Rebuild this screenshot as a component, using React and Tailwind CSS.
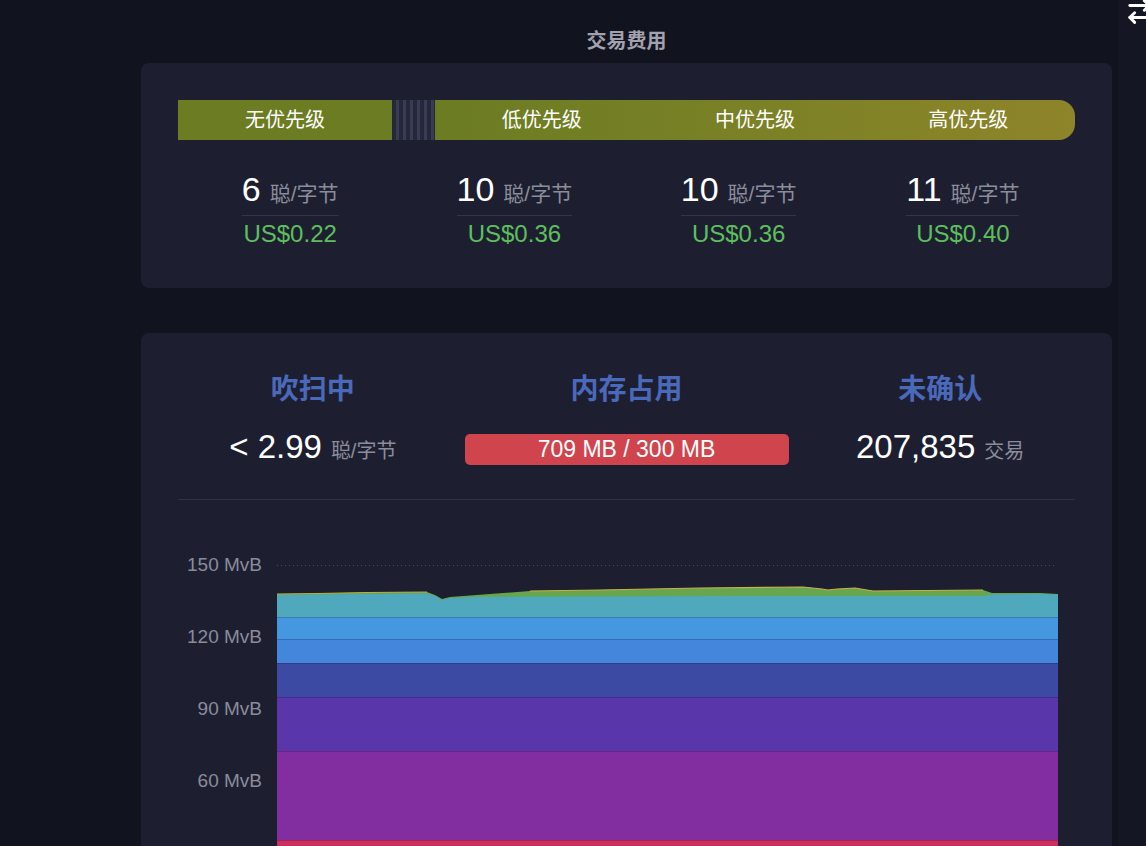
import React from "react";

const FEES = [
  { v: "6", usd: "US$0.22" },
  { v: "10", usd: "US$0.36" },
  { v: "10", usd: "US$0.36" },
  { v: "11", usd: "US$0.40" },
];

function ArrowIcon() {
  return (
    <svg width="29" height="29" viewBox="0 0 24 24" fill="none" stroke="#ffffff" strokeWidth="2.4" strokeLinecap="round" strokeLinejoin="round">
      <path d="m16 3 4 4-4 4" />
      <path d="M20 7H4" />
      <path d="m8 21-4-4 4-4" />
      <path d="M4 17h16" />
    </svg>
  );
}

function Chart() {
  // coordinates: x' = x - 277, y' = y - 529
  const greenTop =
    "M0 65 L40 64.5 L90 63.5 L150 63 L158 66 L165 70 L173 68 L200 66 L253 62 L323 61 L423 59 L526 58 L545 60 L551 61 L560 60 L578 59 L596 62 L650 61.5 L706 61 L712 63 L715 64 L763 64 L781 65 L781 88 L0 88 Z";
  const tealTop =
    "M0 66 L40 65.5 L90 65 L150 64.5 L158 67 L165 71 L173 69 L200 68 L300 67.5 L500 67 L706 67 L715 65.5 L763 65 L781 65.5 L781 88 L0 88 Z";
  const yellow =
    "M253 62 L323 61 L423 59 L526 58 L545 60 L551 61 L560 60 L578 59 L596 62 L650 61.5 L706 61";
  return (
    <svg width="781" height="360" viewBox="0 0 781 360" className="block shrink-0">
      <line x1="0" y1="36.5" x2="779" y2="36.5" stroke="#4b4d62" strokeWidth="1" strokeDasharray="1 3" />
      <path d={greenTop} fill="#67a64e" />
      <path d={yellow} fill="none" stroke="#c9b149" strokeWidth="1.2" />
      <path d="M0 65 L40 64.5 L90 63.5 L150 63" fill="none" stroke="#b8b04a" strokeWidth="1" />
      <path d={tealTop} fill="#4fa8bc" />
      <rect x="0" y="88" width="781" height="22" fill="#4598df" />
      <rect x="0" y="110" width="781" height="24" fill="#4386db" />
      <rect x="0" y="134" width="781" height="34" fill="#3c4aa4" />
      <rect x="0" y="168" width="781" height="54" fill="#5936a9" />
      <rect x="0" y="222" width="781" height="89" fill="#822da0" />
      <rect x="0" y="311" width="781" height="49" fill="#cb2f5f" />
      <g stroke="#000000" strokeOpacity="0.18" strokeWidth="1">
        <line x1="0" y1="88.5" x2="781" y2="88.5" />
        <line x1="0" y1="110.5" x2="781" y2="110.5" />
        <line x1="0" y1="134.5" x2="781" y2="134.5" />
        <line x1="0" y1="168.5" x2="781" y2="168.5" />
        <line x1="0" y1="222.5" x2="781" y2="222.5" />
        <line x1="0" y1="311.5" x2="781" y2="311.5" />
      </g>
    </svg>
  );
}

export default function App() {
  return (
    <div className="flex h-screen w-full overflow-hidden bg-[#11131f] font-['Liberation_Sans','Noto_Sans_CJK_SC',sans-serif]">
      <main className="flex-1 min-w-0 pl-[141px] pr-[6px]">
        <h2 className="pt-[28px] pb-[9px] text-center text-[20px] font-semibold leading-[26px] text-[#a1a2ad]">
          交易费用
        </h2>

        {/* Fee card */}
        <section className="rounded-[8px] bg-[#1d1f31] px-[37px] pt-[37px] pb-[40px]">
          <div className="flex h-[40px] text-[20px] leading-[40px] text-white">
            <div className="w-[214px] bg-[#6b7c23] text-center">无优先级</div>
            <div className="w-[43px] bg-[repeating-linear-gradient(90deg,#25273b_0px,#25273b_4px,#393c54_4px,#393c54_7px)]" />
            <div className="grid flex-1 grid-cols-3 rounded-r-[16px] bg-gradient-to-r from-[#6b7c23] via-[#7b8126] to-[#8e842a] text-center">
              <div>低优先级</div>
              <div>中优先级</div>
              <div>高优先级</div>
            </div>
          </div>

          <div className="mt-[28px] grid grid-cols-4">
            {FEES.map((f, i) => (
              <div key={i} className="flex flex-col items-center">
                <div className="flex h-[48px] items-baseline gap-[9px] overflow-hidden border-b border-[#33354a]">
                  <span className="text-[34px] leading-[42px] text-white">{f.v}</span>
                  <span className="text-[21px] leading-[42px] text-[#8b8d9b]">聪/字节</span>
                </div>
                <div className="mt-[4px] text-[24px] leading-[28px] text-[#5dbf5c]">{f.usd}</div>
              </div>
            ))}
          </div>
        </section>

        {/* Mempool card */}
        <section className="mt-[45px] rounded-[8px] bg-[#1d1f31] px-[37px] pt-[39px] pb-[40px]">
          <div className="-mx-[22px] grid grid-cols-3 text-center">
            <div className="text-[28px] font-semibold leading-[36px] text-[#4b69ba]">吹扫中</div>
            <div className="text-[28px] font-semibold leading-[36px] text-[#4b69ba]">内存占用</div>
            <div className="text-[28px] font-semibold leading-[36px] text-[#4b69ba]">未确认</div>
          </div>
          <div className="-mx-[22px] mt-[19px] grid h-[40px] grid-cols-3 items-center">
            <div className="flex items-baseline justify-center gap-[9px]">
              <span className="text-[33px] leading-[40px] text-white">&lt; 2.99</span>
              <span className="text-[20px] leading-[40px] text-[#8b8d9b]">聪/字节</span>
            </div>
            <div className="flex justify-center">
              <div className="flex h-[31px] w-[324px] shrink-0 items-center justify-center rounded-[5px] bg-[#cf444d] text-[23px] text-white">
                709 MB / 300 MB
              </div>
            </div>
            <div className="flex items-baseline justify-center gap-[9px]">
              <span className="text-[33px] leading-[40px] text-white">207,835</span>
              <span className="text-[20px] leading-[40px] text-[#8b8d9b]">交易</span>
            </div>
          </div>

          <div className="mt-[32px] h-px bg-[#30324a]" />

          <div className="mt-[29px] flex">
            <div className="flex w-[99px] shrink-0 flex-col pr-[15px] text-right text-[19px] text-[#8a8c9a]">
              <div className="flex h-[72px] items-center justify-end">150 MvB</div>
              <div className="flex h-[72px] items-center justify-end">120 MvB</div>
              <div className="flex h-[72px] items-center justify-end">90 MvB</div>
              <div className="flex h-[72px] items-center justify-end">60 MvB</div>
              <div className="flex h-[72px] items-center justify-end">30 MvB</div>
            </div>
            <Chart />
          </div>
        </section>
      </main>
      <aside className="w-[28px] shrink-0 overflow-hidden bg-[#141624] pl-[7px]">
        <div className="-mt-[3px]">
          <ArrowIcon />
        </div>
      </aside>
    </div>
  );
}
